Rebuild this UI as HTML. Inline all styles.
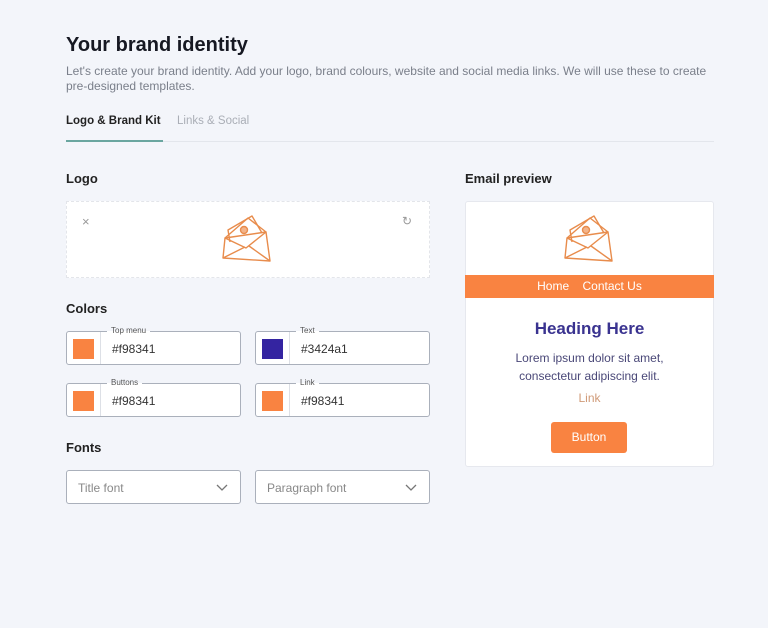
<!DOCTYPE html>
<html><head><style>
*{box-sizing:border-box;margin:0;padding:0}
body{width:768px;height:628px;background:#f3f5fa;font-family:"Liberation Sans",sans-serif;color:#1f2230;position:relative;overflow:hidden}
.a{position:absolute}
.h{font-size:13px;font-weight:bold;color:#222}
.inp{position:absolute;width:175px;height:34px;border:1px solid #aab0bb;border-radius:3px;background:#fff}
.inp .sw{position:absolute;left:6px;top:7px;width:21px;height:20px}
.inp .sep{position:absolute;left:33px;top:0;bottom:0;border-left:1px solid #dde0e6}
.inp .v{position:absolute;left:45px;top:10px;font-size:12px;color:#333}
.inp .lb{position:absolute;left:40px;top:-6px;font-size:8px;color:#555;padding:0 4px;line-height:10px;background:linear-gradient(#f3f5fa 50%,#fff 50%)}
.sel{position:absolute;width:175px;height:34px;border:1px solid #aab0bb;border-radius:3px;background:#fff;font-size:12px;color:#888;padding:10px 11px}
.sel svg{position:absolute;right:12px;top:13px}
</style></head><body>
<div class="a" style="left:66px;top:34px;font-size:20px;font-weight:bold;color:#161822">Your brand identity</div>
<div class="a" style="left:66px;top:64px;font-size:12px;line-height:15px;color:#7a7f8a;width:690px">Let's create your brand identity. Add your logo, brand colours, website and social media links. We will use these to create<br><span style="white-space:nowrap">pre-designed</span> templates.</div>
<div class="a" style="left:66px;top:115px;font-size:11.5px;font-weight:bold;color:#222">Logo &amp; Brand Kit</div>
<div class="a" style="left:177px;top:115px;font-size:11.5px;color:#aaaeb6">Links &amp; Social</div>
<div class="a" style="left:66px;top:141px;width:648px;height:1px;background:#e3e6ec"></div>
<div class="a" style="left:66px;top:140px;width:97px;height:2px;background:#6aa6a0"></div>

<div class="a h" style="left:66px;top:171px">Logo</div>
<div class="a" style="left:66px;top:201px;width:364px;height:77px;background:#fff;border:1px dashed #e3e5ea"></div>
<div class="a" style="left:82px;top:214px;font-size:13px;color:#999">×</div>
<div class="a" style="left:402px;top:214px;font-size:12px;color:#999">↻</div>
<svg class="a" style="left:218px;top:208px" width="60" height="62" viewBox="0 0 60 62" fill="none" stroke="#e88c4c" stroke-width="1.4" stroke-linejoin="round"><path d="M7 30 L48 24 L52 53 L5 50 Z"/><path d="M7 30 L30 10 L48 24"/><path d="M12 34 L10 22 L34 8 L44 25"/><path d="M7 30 L28 40 L48 24"/><path d="M5 50 L27 39"/><path d="M52 53 L31 38"/><circle cx="26" cy="22" r="3.5" fill="#f3b48a"/></svg>

<div class="a h" style="left:66px;top:301px">Colors</div>
<div class="inp" style="left:66px;top:331px"><div class="sw" style="background:#f98341"></div><div class="sep"></div><div class="lb">Top menu</div><div class="v">#f98341</div></div>
<div class="inp" style="left:255px;top:331px"><div class="sw" style="background:#3424a1"></div><div class="sep"></div><div class="lb">Text</div><div class="v">#3424a1</div></div>
<div class="inp" style="left:66px;top:383px"><div class="sw" style="background:#f98341"></div><div class="sep"></div><div class="lb">Buttons</div><div class="v">#f98341</div></div>
<div class="inp" style="left:255px;top:383px"><div class="sw" style="background:#f98341"></div><div class="sep"></div><div class="lb">Link</div><div class="v">#f98341</div></div>

<div class="a h" style="left:66px;top:440px">Fonts</div>
<div class="sel" style="left:66px;top:470px">Title font<svg width="12" height="8"><path d="M1 1 L6 6 L11 1" stroke="#777" fill="none" stroke-width="1.3"/></svg></div>
<div class="sel" style="left:255px;top:470px">Paragraph font<svg width="12" height="8"><path d="M1 1 L6 6 L11 1" stroke="#777" fill="none" stroke-width="1.3"/></svg></div>

<div class="a h" style="left:465px;top:171px">Email preview</div>
<div class="a" style="left:465px;top:201px;width:249px;height:266px;background:#fff;border:1px solid #e6e8ee;border-radius:3px"></div>
<svg class="a" style="left:560px;top:208px" width="60" height="62" viewBox="0 0 60 62" fill="none" stroke="#e88c4c" stroke-width="1.4" stroke-linejoin="round"><path d="M7 30 L48 24 L52 53 L5 50 Z"/><path d="M7 30 L30 10 L48 24"/><path d="M12 34 L10 22 L34 8 L44 25"/><path d="M7 30 L28 40 L48 24"/><path d="M5 50 L27 39"/><path d="M52 53 L31 38"/><circle cx="26" cy="22" r="3.5" fill="#f3b48a"/></svg>
<div class="a" style="left:465px;top:275px;width:249px;height:23px;background:#f98341;color:#fff;font-size:12px;text-align:center;line-height:22px">Home&nbsp;&nbsp;&nbsp;&nbsp;Contact Us</div>
<div class="a" style="left:465px;top:319px;width:249px;text-align:center;font-size:17px;font-weight:bold;color:#3a3390">Heading Here</div>
<div class="a" style="left:465px;top:349px;width:249px;text-align:center;font-size:12px;line-height:18px;color:#4a4878">Lorem ipsum dolor sit amet,<br>consectetur adipiscing elit.</div>
<div class="a" style="left:465px;top:391px;width:249px;text-align:center;font-size:12px;color:#d09a78">Link</div>
<div class="a" style="left:551px;top:422px;width:76px;height:31px;background:#f98341;border-radius:3px;color:#fff;font-size:12px;text-align:center;line-height:31px">Button</div>
</body></html>
